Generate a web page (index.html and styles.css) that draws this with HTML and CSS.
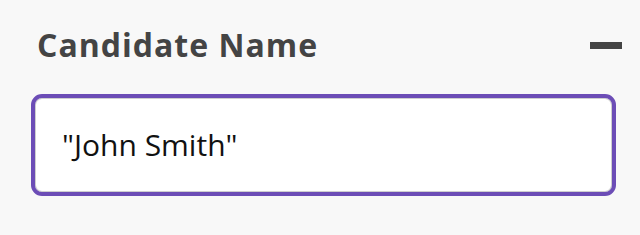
FILE: index.html
```html
<!DOCTYPE html>
<html>
<head>
<meta charset="utf-8">
<link rel="stylesheet" href="styles.css">
</head>
<body>
<div class="panel">
  <div class="header">
    <h2 class="title">Candidate Name</h2>
    <span class="collapse" aria-label="Collapse"></span>
  </div>
  <div class="field">
    <span class="value">"John Smith"</span>
  </div>
</div>
</body>
</html>
```

FILE: styles.css
```css
html, body {
  margin: 0;
  padding: 0;
  background: #f8f8f8;
}
body {
  font-family: "Open Sans", "Lato", sans-serif;
}
.panel {
  width: 585px;
  padding: 27px 0 0 31px;
}
.header {
  display: flex;
  align-items: center;
  justify-content: space-between;
  margin-right: -6px;
  padding-left: 6px;
}
.title {
  margin: 0;
  font-size: 32px;
  line-height: 36px;
  font-weight: 700;
  letter-spacing: 1px;
  color: #444444;
}
.collapse {
  display: block;
  width: 32px;
  height: 7px;
  background: #444444;
}
.field {
  box-sizing: border-box;
  height: 102px;
  margin-top: 31px;
  border: 4px solid #6c4db6;
  border-radius: 11px;
  box-shadow: inset 0 0 0 1px #cfcfcf;
  background: #ffffff;
  display: flex;
  align-items: center;
  padding-left: 27px;
}
.value {
  font-size: 30px;
  color: #111111;
  line-height: 36px;
}
```
